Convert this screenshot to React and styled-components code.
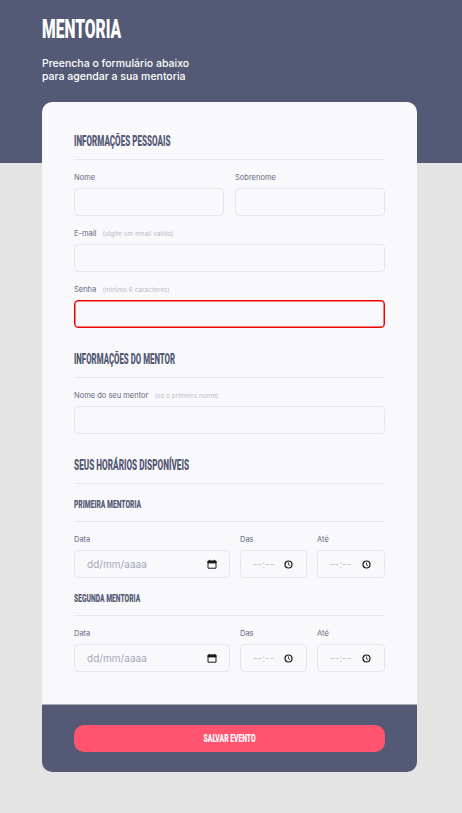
import React from "react";
import styled, { createGlobalStyle } from "styled-components";

const GlobalStyle = createGlobalStyle`
  html, body {
    margin: 0;
    padding: 0;
  }
  * {
    box-sizing: border-box;
  }
  body {
    font-family: "Inter", "Liberation Sans", sans-serif;
    background: #e4e4e4;
  }
`
const Page = styled.div`
  width: 462px;
  height: 813px;
  padding: 18px 45px 0 42px;
  background: linear-gradient(#545a75 163px, #e4e4e4 163px);
  overflow: hidden;
`
// no condensed family is installed, so the display text is narrowed by hand
const Condensed = styled.span`
  display: inline-block;
  white-space: nowrap;
  font-family: "Roboto", "Liberation Sans", sans-serif;
  font-weight: 900;
  transform: scaleX(${(props) => props.$scale});
  transform-origin: ${(props) => props.$origin || "left"} center;
`
const Title = styled.h1`
  margin: 0;
  height: 22px;
  font-size: 26px;
  line-height: 22px;
  color: #fff;
`
const Subtitle = styled.p`
  margin: 17px 0 0 0;
  height: 26px;
  font-size: 10.5px;
  line-height: 13px;
  font-weight: 500;
  color: #fff;
`
const Card = styled.form`
  margin-top: 19px;
  height: 670px;
  display: flex;
  flex-direction: column;
  background: #f9f9fc;
  border-radius: 10px;
  overflow: hidden;
`
const CardBody = styled.div`
  flex: 1;
  padding: 29px 32px 0 32px;
`
const Heading = styled.h2`
  margin: ${(props) => (props.$first ? "0" : "21px")} 0 0 0;
  padding-bottom: 8px;
  height: 29px;
  border-bottom: 1px solid #e6e6f0;
  font-size: 14px;
  line-height: 20px;
  color: #545a75;
`
const SubHeading = styled.h3`
  margin: 10px 0 0 0;
  height: 28px;
  border-bottom: 1px solid #e6e6f0;
  font-size: 11px;
  line-height: 20px;
  color: #545a75;
`
const Row = styled.div`
  display: grid;
  grid-template-columns: ${(props) => props.$columns || "1fr"};
  column-gap: ${(props) => props.$gap || "11px"};
  margin-top: 11px;
`
const Field = styled.div`
  min-width: 0;
`
const Label = styled.label`
  display: block;
  height: 12px;
  margin-bottom: 5px;
  font-size: 7.5px;
  line-height: 14px;
  color: #62677f;
  white-space: nowrap;
`
const Hint = styled.span`
  margin-left: 4px;
  font-size: 6.5px;
  color: #b9bccd;
`
const Input = styled.input`
  display: block;
  width: 100%;
  height: 28px;
  padding: 0 12px;
  background: #f9f9fc;
  border: 1px solid ${(props) => (props.$error ? "#f00000" : "#e6e6f0")};
  box-shadow: ${(props) => (props.$error ? "0 0 0 0.5px #f00000 inset" : "none")};
  border-radius: 4px;
  outline: none;
`
const FakePicker = styled.div`
  display: flex;
  align-items: center;
  justify-content: space-between;
  height: 28px;
  padding: 0 ${(props) => (props.$time ? "13px" : "12px")} 0 12px;
  background: #f9f9fc;
  border: 1px solid #e6e6f0;
  border-radius: 4px;
  font-size: 10px;
  letter-spacing: ${(props) => (props.$time ? "0" : "0.05px")};
  color: ${(props) => (props.$time ? "#b9bccd" : "#a3a6b8")};
`
const CardFooter = styled.div`
  height: 68px;
  padding: 20px 32px;
  background: #545a75;
  border-top: 1px solid #a9abb6;
`
const SaveButton = styled.button`
  display: block;
  width: 100%;
  height: 27px;
  padding: 0;
  border: none;
  border-radius: 10px;
  background: #ff5370;
  font-size: 10.5px;
  color: #fff;
`

const CalendarIcon = () => (
  <svg width="10" height="10" viewBox="0 0 10 10" fill="none">
    <path d="M1 2.2h8v7H1z" stroke="#1a1a1a" strokeWidth="1" />
    <path d="M1 2h8v2H1zM2.6 0.8v1.4M7.4 0.8v1.4" fill="#1a1a1a" stroke="#1a1a1a" strokeWidth="0.8" />
  </svg>
)

const ClockIcon = () => (
  <svg width="9" height="9" viewBox="0 0 9 9" fill="none">
    <circle cx="4.5" cy="4.5" r="3.5" stroke="#1a1a1a" strokeWidth="1.2" />
    <path d="M4.5 2.6v2l1.5 1" stroke="#1a1a1a" strokeWidth="0.9" />
  </svg>
)

const ScheduleRow = () => (
  <Row $columns="156px 67px 68px" $gap="10px">
    <Field>
      <Label>Data</Label>
      <FakePicker>
        dd/mm/aaaa
        <CalendarIcon />
      </FakePicker>
    </Field>
    <Field>
      <Label>Das</Label>
      <FakePicker $time>
        --:--
        <ClockIcon />
      </FakePicker>
    </Field>
    <Field>
      <Label>Até</Label>
      <FakePicker $time>
        --:--
        <ClockIcon />
      </FakePicker>
    </Field>
  </Row>
)

const App = () => {
  return (
    <Page>
      <GlobalStyle />
      <Title><Condensed $scale="0.6">MENTORIA</Condensed></Title>
      <Subtitle>
        Preencha o formulário abaixo
        <br />
        para agendar a sua mentoria
      </Subtitle>
      <Card>
        <CardBody>
          <Heading $first><Condensed $scale="0.575">INFORMAÇÕES PESSOAIS</Condensed></Heading>
          <Row $columns="1fr 1fr">
            <Field>
              <Label>Nome</Label>
              <Input />
            </Field>
            <Field>
              <Label>Sobrenome</Label>
              <Input />
            </Field>
          </Row>
          <Row>
            <Field>
              <Label>
                E-mail <Hint>(digite um email válido)</Hint>
              </Label>
              <Input />
            </Field>
          </Row>
          <Row>
            <Field>
              <Label>
                Senha <Hint>(mínimo 6 caracteres)</Hint>
              </Label>
              <Input $error />
            </Field>
          </Row>

          <Heading><Condensed $scale="0.56">INFORMAÇÕES DO MENTOR</Condensed></Heading>
          <Row>
            <Field>
              <Label>
                Nome do seu mentor <Hint>(só o primeiro nome)</Hint>
              </Label>
              <Input />
            </Field>
          </Row>

          <Heading><Condensed $scale="0.585">SEUS HORÁRIOS DISPONÍVEIS</Condensed></Heading>
          <SubHeading><Condensed $scale="0.61">PRIMEIRA MENTORIA</Condensed></SubHeading>
          <ScheduleRow />
          <SubHeading><Condensed $scale="0.61">SEGUNDA MENTORIA</Condensed></SubHeading>
          <ScheduleRow />
        </CardBody>
        <CardFooter>
          <SaveButton type="button"><Condensed $scale="0.64" $origin="center">SALVAR EVENTO</Condensed></SaveButton>
        </CardFooter>
      </Card>
    </Page>
  );
}

export default App
